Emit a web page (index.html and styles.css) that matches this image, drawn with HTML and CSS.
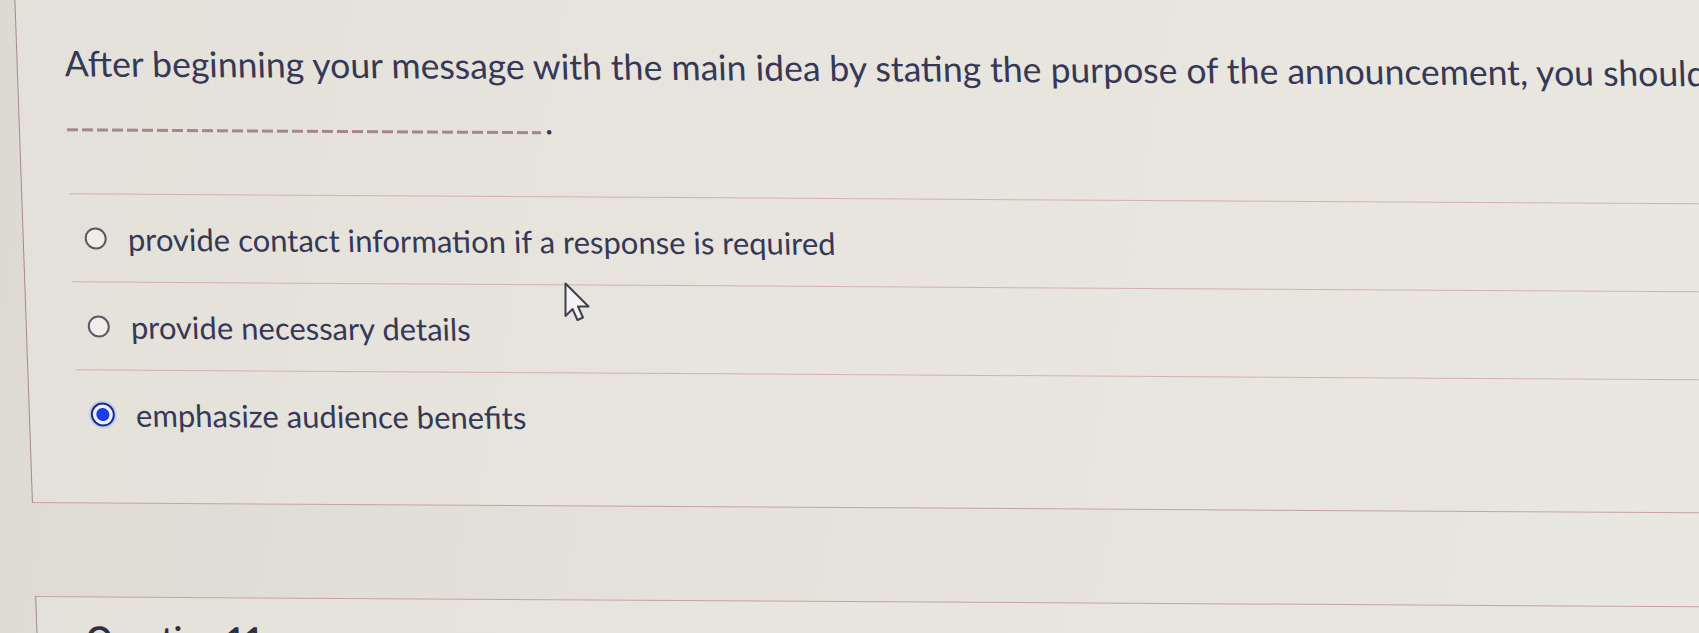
FILE: index.html
```html
<!DOCTYPE html>
<html lang="en">
<head>
    <meta charset="UTF-8">
    <meta name="viewport" content="width=device-width, initial-scale=1.0">
    <title>Quiz - Question 10</title>
    <link rel="stylesheet" href="styles.css">
</head>
<body>
    <div class="quiz">
        <div class="question-card">
            <p class="question-text">
                After beginning your message with the main idea by stating the purpose of the announcement, you should<br>
                <span class="blank"></span>.
            </p>
            <div class="answers">
                <label class="answer">
                    <span class="radio"></span>
                    <span class="answer-text">provide contact information if a response is required</span>
                </label>
                <label class="answer">
                    <span class="radio"></span>
                    <span class="answer-text">provide necessary details</span>
                </label>
                <label class="answer">
                    <span class="radio checked"></span>
                    <span class="answer-text">emphasize audience benefits</span>
                </label>
            </div>
        </div>

        <div class="question-card next">
            <h2 class="question-title">Question 11</h2>
        </div>
    </div>

    <svg class="pointer" width="26" height="40" viewBox="0 0 26 40">
        <path d="M1.5 1.5 L1.5 34 L8.5 27 L13.5 38 L19 35.5 L14 24.5 L24.5 24.5 Z" fill="#f4f3ef" stroke="#3e4050" stroke-width="2" stroke-linejoin="round"/>
    </svg>
</body>
</html>
```

FILE: styles.css
```css
* {
    box-sizing: border-box;
    margin: 0;
    padding: 0;
}
body {
    font-family: 'Lato', 'Liberation Sans', sans-serif;
    background: linear-gradient(100deg, #dcdad1 0%, #e4e2da 45%, #e8e7e0 100%);
    color: #363857;
    width: 1699px;
    height: 633px;
    overflow: hidden;
    position: relative;
}
.quiz {
    margin-top: -40px;
    padding-left: 13px;
    transform: skew(2deg, 0.35deg);
    transform-origin: 0 0;
}
.question-card {
    width: 2100px;
    border: 1px solid #c7a3a1;
    border-left-color: #a58a8c;
    background: rgba(234, 231, 223, 0.5);
    padding: 74px 0 45px 47px;
}
.question-text {
    font-size: 35.5px;
    line-height: 55px;
    margin-bottom: 48px;
    white-space: nowrap;
}
.blank {
    display: inline-block;
    width: 474px;
    height: 3px;
    margin-right: 4px;
    vertical-align: baseline;
    background: repeating-linear-gradient(90deg, #a8848e 0 11px, transparent 11px 15px);
}
.answers {
    font-size: 31px;
}
.answer {
    display: flex;
    align-items: center;
    height: 88px;
    border-top: 1px solid #d5b1ad;
    padding-left: 14px;
    gap: 21px;
}
.radio {
    width: 22px;
    height: 22px;
    border-radius: 50%;
    border: 2.5px solid #5d5866;
    background: #efeee9;
    flex-shrink: 0;
}
.radio.checked {
    width: 24px;
    height: 24px;
    border: 2.5px solid #1f2d86;
    background: radial-gradient(circle, #1b3de4 0 6px, #eef0fa 7px);
    box-shadow: 0 0 0 2px rgba(190, 205, 245, 0.85);
}
.question-card.next {
    margin-top: 93px;
    padding: 20px 0 0 49px;
}
.question-title {
    font-size: 32px;
    font-weight: 700;
    color: #2e3042;
}
.pointer {
    position: absolute;
    left: 564px;
    top: 282px;
}
```
